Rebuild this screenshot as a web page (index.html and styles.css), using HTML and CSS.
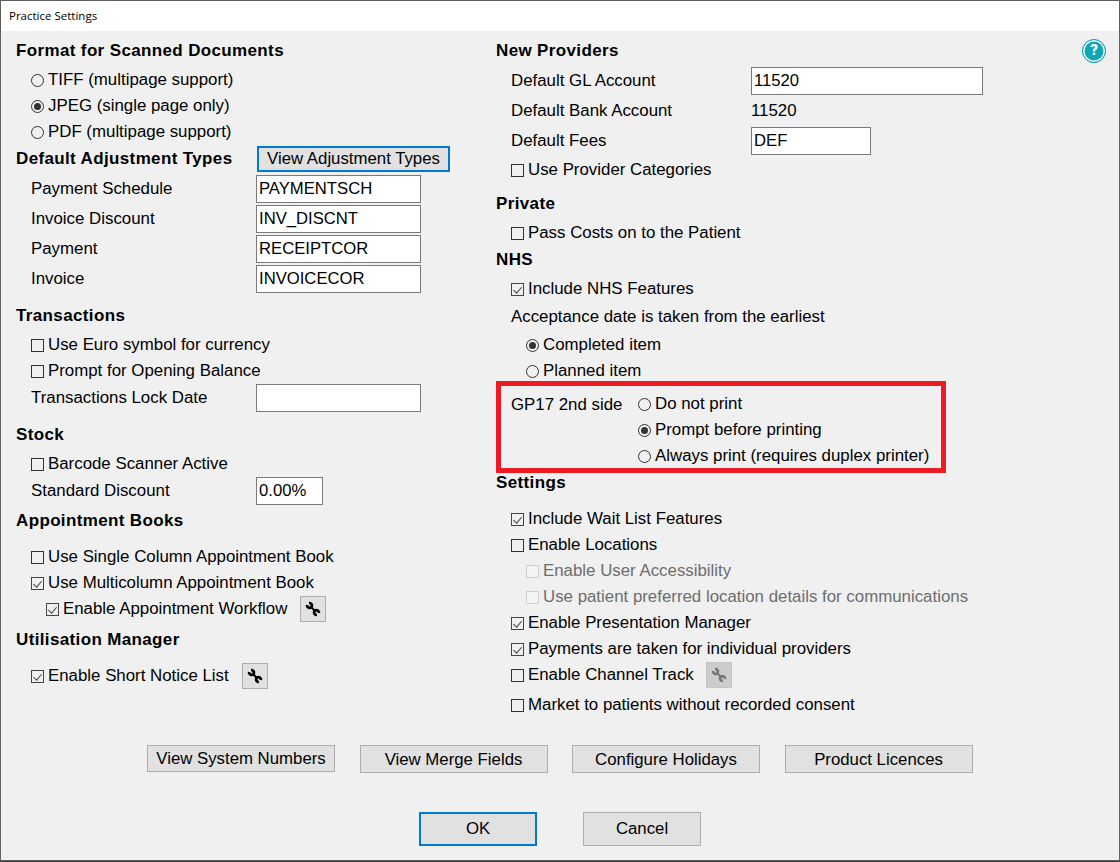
FILE: index.html
```html
<!DOCTYPE html>
<html lang="en">
<head>
    <meta charset="UTF-8">
    <meta name="viewport" content="width=device-width, initial-scale=1.0">
    <title>Practice Settings</title>
    <link rel="stylesheet" href="styles.css">
</head>
<body>
    <svg class="defs" width="0" height="0">
        <symbol id="wrench" viewBox="0 0 16 16">
            <path d="M2.14 4.08 A2.4 2.4 0 1 0 4.08 2.14"/>
            <path class="wrench-handle" d="M6 6 L10 10"/>
            <path d="M13.86 11.92 A2.4 2.4 0 1 0 11.92 13.86"/>
        </symbol>
    </svg>

    <div class="window">
        <div class="title-bar">Practice Settings</div>

        <div class="content">
            <a href="#" class="help">?</a>

            <div class="columns">
                <!-- Left column -->
                <div class="col col-left">
                    <div class="row heading">Format for Scanned Documents</div>
                    <label class="row indent m3"><input type="radio" name="format">TIFF (multipage support)</label>
                    <label class="row indent"><input type="radio" name="format" checked>JPEG (single page only)</label>
                    <label class="row indent"><input type="radio" name="format">PDF (multipage support)</label>

                    <div class="row heading tall">
                        <span class="label">Default Adjustment Types</span>
                        <button class="btn btn-focus btn-types">View Adjustment Types</button>
                    </div>
                    <div class="row field indent m1"><span class="label">Payment Schedule</span><input class="text w-165" type="text" value="PAYMENTSCH"></div>
                    <div class="row field indent"><span class="label">Invoice Discount</span><input class="text w-165" type="text" value="INV_DISCNT"></div>
                    <div class="row field indent"><span class="label">Payment</span><input class="text w-165" type="text" value="RECEIPTCOR"></div>
                    <div class="row field indent"><span class="label">Invoice</span><input class="text w-165" type="text" value="INVOICECOR"></div>

                    <div class="row heading m9">Transactions</div>
                    <label class="row indent m3"><input type="checkbox">Use Euro symbol for currency</label>
                    <label class="row indent"><input type="checkbox">Prompt for Opening Balance</label>
                    <div class="row tall indent"><span class="label">Transactions Lock Date</span><input class="text w-165" type="text"></div>

                    <div class="row heading m10">Stock</div>
                    <label class="row indent m3"><input type="checkbox">Barcode Scanner Active</label>
                    <div class="row tall indent"><span class="label">Standard Discount</span><input class="text w-67" type="text" value="0.00%"></div>

                    <div class="row heading m3">Appointment Books</div>
                    <label class="row indent m10"><input type="checkbox">Use Single Column Appointment Book</label>
                    <label class="row indent"><input type="checkbox" checked>Use Multicolumn Appointment Book</label>
                    <div class="row sub">
                        <label class="inline"><input type="checkbox" checked>Enable Appointment Workflow</label>
                        <button class="tool"><svg><use href="#wrench"/></svg></button>
                    </div>

                    <div class="row heading m5">Utilisation Manager</div>
                    <div class="row indent m10">
                        <label class="inline"><input type="checkbox" checked>Enable Short Notice List</label>
                        <button class="tool"><svg><use href="#wrench"/></svg></button>
                    </div>
                </div>

                <!-- Right column -->
                <div class="col col-right">
                    <div class="row heading">New Providers</div>
                    <div class="row field indent m2"><span class="label">Default GL Account</span><input class="text w-232" type="text" value="11520"></div>
                    <div class="row field indent"><span class="label">Default Bank Account</span><span>11520</span></div>
                    <div class="row field indent"><span class="label">Default Fees</span><input class="text w-120" type="text" value="DEF"></div>
                    <label class="row indent m1"><input type="checkbox">Use Provider Categories</label>

                    <div class="row heading m8">Private</div>
                    <label class="row indent m3"><input type="checkbox">Pass Costs on to the Patient</label>

                    <div class="row heading m1">NHS</div>
                    <label class="row indent m3"><input type="checkbox" checked>Include NHS Features</label>
                    <div class="row indent m2">Acceptance date is taken from the earliest</div>
                    <label class="row sub m2"><input type="radio" name="accept" checked>Completed item</label>
                    <label class="row sub"><input type="radio" name="accept">Planned item</label>

                    <div class="gp17">
                        <span class="gp17-label">GP17 2nd side</span>
                        <div>
                            <label class="row"><input type="radio" name="gp17">Do not print</label>
                            <label class="row"><input type="radio" name="gp17" checked>Prompt before printing</label>
                            <label class="row"><input type="radio" name="gp17">Always print (requires duplex printer)</label>
                        </div>
                    </div>

                    <div class="row heading settings">Settings</div>
                    <label class="row indent m10"><input type="checkbox" checked>Include Wait List Features</label>
                    <label class="row indent"><input type="checkbox">Enable Locations</label>
                    <label class="row sub disabled"><input type="checkbox" disabled>Enable User Accessibility</label>
                    <label class="row sub disabled"><input type="checkbox" disabled>Use patient preferred location details for communications</label>
                    <label class="row indent"><input type="checkbox" checked>Enable Presentation Manager</label>
                    <label class="row indent"><input type="checkbox" checked>Payments are taken for individual providers</label>
                    <div class="row indent">
                        <label class="inline"><input type="checkbox">Enable Channel Track</label>
                        <button class="tool tool-off" disabled><svg><use href="#wrench"/></svg></button>
                    </div>
                    <label class="row indent m4"><input type="checkbox">Market to patients without recorded consent</label>
                </div>
            </div>

            <div class="actions">
                <button class="btn btn-action btn-short">View System Numbers</button>
                <button class="btn btn-action">View Merge Fields</button>
                <button class="btn btn-action">Configure Holidays</button>
                <button class="btn btn-action">Product Licences</button>
            </div>

            <div class="footer">
                <button class="btn btn-focus btn-footer">OK</button>
                <button class="btn btn-footer">Cancel</button>
            </div>
        </div>
    </div>
</body>
</html>
```

FILE: styles.css
```css
:root {
    --panel: #f0f0f0;
    --text: #000;
    --disabled: #6d6d6d;
    --btn: #e1e1e1;
    --btn-border: #adadad;
    --focus: #0078d7;
    --field-border: #7a7a7a;
    --red: #ed1c24;
    --teal: #0ea5b5;
}

* {
    margin: 0;
    padding: 0;
    box-sizing: border-box;
    font-family: "Liberation Sans", Arial, sans-serif;
}

html, body {
    height: 100%;
}

body {
    background-color: #3a3a3a;
    color: var(--text);
    font-size: 16.85px;
    overflow: hidden;
}

.defs {
    position: absolute;
}

.window {
    height: 861px;
    border: 1px solid #5f5f5f;
    background-color: var(--panel);
    display: flex;
    flex-direction: column;
}

.title-bar {
    height: 30px;
    flex: none;
    background-color: #fff;
    padding-left: 8px;
    font-family: "Open Sans", sans-serif;
    font-size: 11.5px;
    line-height: 30px;
}

.content {
    position: relative;
    flex: 1;
    padding: 7px 0 0 15px;
}

.help {
    position: absolute;
    top: 8px;
    right: 13px;
    width: 24px;
    height: 24px;
    border-radius: 50%;
    background-color: var(--teal);
    border: 1.5px solid var(--teal);
    box-shadow: inset 0 0 0 1.5px #fff;
    color: #fff;
    font-family: "Roboto", sans-serif;
    font-weight: 900;
    font-size: 15px;
    line-height: 21px;
    text-align: center;
    text-decoration: none;
}

.columns {
    display: flex;
    height: 707px;
}

.col-left {
    width: 480px;
    flex: none;
}

.col-left .label {
    width: 225px;
    flex: none;
}

.col-left .heading .label {
    width: 240px;
}

.col-right .label {
    width: 240px;
    flex: none;
}

.row {
    display: flex;
    align-items: center;
    height: 26px;
    white-space: nowrap;
}

.heading {
    font-weight: bold;
    font-size: 17px;
    letter-spacing: 0.36px;
}

.field {
    height: 30px;
}

.tall {
    height: 28px;
}

.indent {
    padding-left: 15px;
}

.sub {
    padding-left: 30px;
}

.m1 { margin-top: 1px; }
.m2 { margin-top: 2px; }
.m3 { margin-top: 3px; }
.m4 { margin-top: 4px; }
.m5 { margin-top: 5px; }
.m8 { margin-top: 8px; }
.m9 { margin-top: 9px; }
.m10 { margin-top: 10px; }

.inline {
    display: flex;
    align-items: center;
}

.disabled {
    color: var(--disabled);
}

input[type="checkbox"],
input[type="radio"] {
    appearance: none;
    position: relative;
    width: 13px;
    height: 13px;
    flex: none;
    margin-right: 4px;
    background-color: var(--panel);
    border: 1px solid #333;
}

input[type="radio"] {
    border-radius: 50%;
}

input[type="radio"]:checked::after {
    content: "";
    position: absolute;
    top: 2px;
    left: 2px;
    width: 7px;
    height: 7px;
    border-radius: 50%;
    background-color: #333;
}

input[type="checkbox"]:checked {
    border-color: #444;
}

input[type="checkbox"]:checked::after {
    content: "";
    position: absolute;
    top: 1px;
    left: 3px;
    width: 4px;
    height: 7px;
    border: solid #444;
    border-width: 0 1.5px 1.5px 0;
    transform: rotate(40deg);
}

input[type="checkbox"]:disabled {
    border-color: #cfcfcf;
    background-color: #f4f4f4;
}

.text {
    height: 28px;
    padding: 0 2px;
    border: 1px solid var(--field-border);
    background-color: #fff;
    font-size: 16.67px;
    outline: none;
}

.w-67 { width: 67px; }
.w-120 { width: 120px; }
.w-165 { width: 165px; }
.w-232 { width: 232px; }

.btn {
    background-color: var(--btn);
    border: 1px solid var(--btn-border);
    color: var(--text);
    font-size: 16.8px;
    font-weight: normal;
    letter-spacing: 0;
}

.btn-focus {
    border: 2px solid var(--focus);
}

.btn-types {
    width: 193px;
    height: 26px;
    margin-left: 1px;
}

.tool {
    display: flex;
    align-items: center;
    justify-content: center;
    width: 26px;
    height: 26px;
    margin-left: 13px;
    background-color: #e1e1e1;
    border: 1px solid var(--btn-border);
    color: #000;
}

.tool svg {
    width: 16px;
    height: 16px;
    fill: none;
    stroke: currentColor;
    stroke-width: 2.8;
}

.wrench-handle {
    stroke-width: 2;
}

.tool-off {
    margin-left: 12px;
    background-color: #cccccc;
    border-color: #c4c4c4;
    color: #777;
}

.gp17 {
    display: flex;
    width: 450px;
    height: 92px;
    margin-top: -3px;
    padding: 5px 0 0 10px;
    border: 5px solid var(--red);
}

.gp17-label {
    width: 127px;
    flex: none;
    line-height: 28px;
}

.settings {
    margin-top: -3px;
}

.actions {
    display: flex;
    gap: 24.5px;
    margin-left: 131px;
}

.btn-action {
    width: 188px;
    height: 28px;
    padding-top: 1px;
}

.btn-short {
    height: 27px;
    padding-top: 0;
}

.footer {
    display: flex;
    gap: 46px;
    margin-left: 403px;
    margin-top: 39px;
}

.btn-footer {
    width: 118px;
    height: 34px;
}
```
